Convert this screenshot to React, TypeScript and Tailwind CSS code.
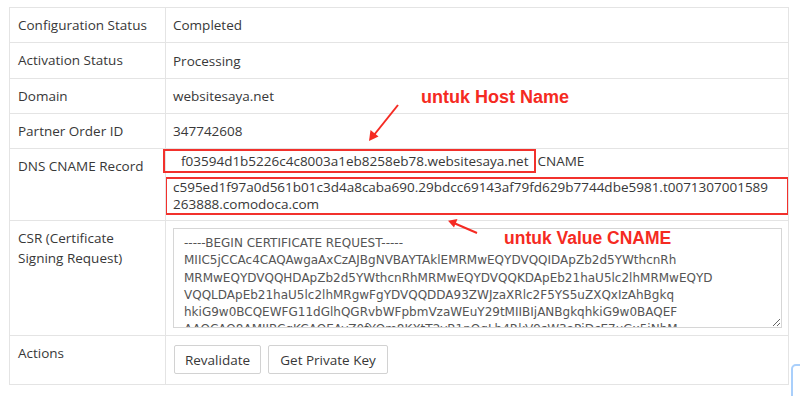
import type { ReactNode } from "react";

const csr = [
  "-----BEGIN CERTIFICATE REQUEST-----",
  "MIIC5jCCAc4CAQAwgaAxCzAJBgNVBAYTAklEMRMwEQYDVQQIDApZb2d5YWthcnRh",
  "MRMwEQYDVQQHDApZb2d5YWthcnRhMRMwEQYDVQQKDApEb21haU5lc2lhMRMwEQYD",
  "VQQLDApEb21haU5lc2lhMRgwFgYDVQQDDA93ZWJzaXRlc2F5YS5uZXQxIzAhBgkq",
  "hkiG9w0BCQEWFG11dGlhQGRvbWFpbmVzaWEuY29tMIIBIjANBgkqhkiG9w0BAQEF",
  "AAOCAQ8AMIIBCgKCAQEAvZ0fYQm8KXtT2yB1nOqLh4RkV9sW3aPjDcE7uGx5iNbM",
  "-----END CERTIFICATE REQUEST-----",
].join("\n");

function Row({
  label,
  children,
  valueClassName = "",
}: {
  label: ReactNode;
  children: ReactNode;
  valueClassName?: string;
}) {
  return (
    <tr>
      <td className="border border-[#e4e4e4] px-[8px] py-[7px] align-top leading-5">
        {label}
      </td>
      <td
        className={
          "border border-[#e4e4e4] pl-[7px] pr-[8px] align-top leading-5 " +
          (valueClassName || "py-[7px]")
        }
      >
        {children}
      </td>
    </tr>
  );
}

export default function App() {
  return (
    <div className="relative h-[396px] w-[800px] overflow-hidden bg-white">
      <div className="pl-[9px] pt-[7px]">
        <table className="w-[780px] table-fixed border-collapse text-[13.5px] text-[#383838] [font-family:'Open_Sans',sans-serif]">
          <colgroup>
            <col className="w-[156px]" />
            <col />
          </colgroup>
          <tbody>
            <Row label="Configuration Status">Completed</Row>
            <Row label="Activation Status">
              <div className="py-[0.5px]">Processing</div>
            </Row>
            <Row label="Domain">websitesaya.net</Row>
            <Row label="Partner Order ID">347742608</Row>
            <Row label="DNS CNAME Record" valueClassName="pt-[0px] pb-[5px]">
              <div className="flex items-center whitespace-nowrap">
                <span className="-ml-[10px] block h-[24px] border-2 border-[#f2312c] pl-[16px] pr-[5px] leading-[20px]">
                  f03594d1b5226c4c8003a1eb8258eb78.websitesaya.net
                </span>
                <span className="pl-[2px]">CNAME</span>
              </div>
              <div className="-ml-[8px] -mr-[9px] mt-[4px] h-[38px] border-2 border-[#f2312c] pl-[6px] leading-[17px] whitespace-nowrap">
                <div>
                  c595ed1f97a0d561b01c3d4a8caba690.29bdcc69143af79fd629b7744dbe5981.t0071307001589
                </div>
                <div>263888.comodoca.com</div>
              </div>
            </Row>
            <Row
              label={
                <>
                  CSR (Certificate
                  <br />
                  Signing Request)
                </>
              }
              valueClassName="pt-[7px] pb-[7px]"
            >
              <textarea
                readOnly
                value={csr}
                wrap="off"
                className="block h-[100px] w-[609px] resize-y overflow-hidden border border-[#d6d6d6] bg-white px-[10px] pt-[6px] text-[12px] leading-[17.3px] text-[#555] outline-none [font-family:'DejaVu_Sans',Verdana,sans-serif]"
              />
            </Row>
            <Row label="Actions" valueClassName="pt-[9px] pb-[10px]">
              <div className="flex gap-[7px] pl-[1px]">
                <button
                  type="button"
                  className="h-[29px] w-[87px] rounded-[2px] border border-[#d2d2d2] bg-white text-[13.5px] text-[#383838]"
                >
                  Revalidate
                </button>
                <button
                  type="button"
                  className="h-[29px] w-[120px] rounded-[2px] border border-[#d2d2d2] bg-white text-[13.5px] text-[#383838]"
                >
                  Get Private Key
                </button>
              </div>
            </Row>
          </tbody>
        </table>
      </div>

      {/* annotations */}
      <span className="pointer-events-none absolute left-[421px] top-[88px] text-[18px] font-bold leading-[18px] text-[#f52a22] [font-family:'Liberation_Sans',Arial,sans-serif]">
        untuk Host Name
      </span>
      <span className="pointer-events-none absolute left-[504px] top-[230px] text-[17.5px] font-bold leading-[17.5px] text-[#f52a22] [font-family:'Liberation_Sans',Arial,sans-serif]">
        untuk Value CNAME
      </span>
      <svg
        className="pointer-events-none absolute left-0 top-0"
        width="800"
        height="396"
        viewBox="0 0 800 396"
        aria-hidden
      >
        <line x1="398" y1="105" x2="374" y2="135" stroke="#f52a22" strokeWidth="2" />
        <polygon points="369,141 370.5,130 378.5,136.5" fill="#f52a22" />
        <line x1="477" y1="233" x2="455" y2="223.5" stroke="#f52a22" strokeWidth="2" />
        <polygon points="448,220.7 457.5,219 454,227.5" fill="#f52a22" />
      </svg>
      <div className="absolute left-[791px] top-[364px] h-[40px] w-[20px] rounded-tl-[5px] border-2 border-[#a9cffb]" />
    </div>
  );
}
